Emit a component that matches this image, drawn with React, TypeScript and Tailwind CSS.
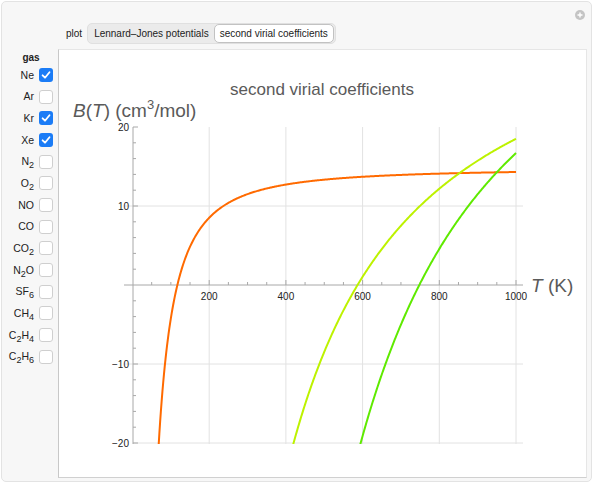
import React from "react";

const Sub = ({ children }: { children: React.ReactNode }) => (
  <span className="text-[9px] relative top-[3px]">{children}</span>
);

const gases: { label: React.ReactNode; checked: boolean }[] = [
  { label: "Ne", checked: true },
  { label: "Ar", checked: false },
  { label: "Kr", checked: true },
  { label: "Xe", checked: true },
  { label: <>N<Sub>2</Sub></>, checked: false },
  { label: <>O<Sub>2</Sub></>, checked: false },
  { label: "NO", checked: false },
  { label: "CO", checked: false },
  { label: <>CO<Sub>2</Sub></>, checked: false },
  { label: <>N<Sub>2</Sub>O</>, checked: false },
  { label: <>SF<Sub>6</Sub></>, checked: false },
  { label: <>CH<Sub>4</Sub></>, checked: false },
  { label: <>C<Sub>2</Sub>H<Sub>4</Sub></>, checked: false },
  { label: <>C<Sub>2</Sub>H<Sub>6</Sub></>, checked: false },
];

// page coords of the chart
const X = (T: number) => 131.5 + 0.3835 * T;
const Y = (B: number) => 284 - 7.9 * B;

// rough fits to the picture
const neon = (T: number) => 14.78 * (1 - Math.pow(117 / T, 1.6));
const expFit = (b: number, a: number, c: number) => (T: number) => b - a * (Math.exp(c / T) - 1);

const curves = [
  { f: neon, from: 50, color: "#ff6a00" },
  { f: expFit(41.26, 122.8, 170), from: 380, color: "#bdf200" },
  { f: expFit(53.15, 60.42, 472), from: 560, color: "#5fea00" },
];

function curvePath(f: (T: number) => number, from: number) {
  const pts: string[] = [];
  for (let T = from; T <= 1000; T += 2) {
    const B = Math.max(-26, Math.min(26, f(T)));
    pts.push(`${X(T).toFixed(2)},${Y(B).toFixed(2)}`);
  }
  return "M" + pts.join(" L");
}

function Checkbox({ checked }: { checked: boolean }) {
  if (checked)
    return (
      <div className="w-[14px] h-[14px] rounded-[3px] bg-[#1b7cf6] flex items-center justify-center">
        <svg width="10" height="10" viewBox="0 0 10 10">
          <path d="M1.6 5.3 L4 7.7 L8.5 2.2" fill="none" stroke="white" strokeWidth="1.8" strokeLinecap="round" strokeLinejoin="round" />
        </svg>
      </div>
    );
  return <div className="w-[14px] h-[14px] rounded-[3px] bg-white border border-[#cfcfcf]" />;
}

function Chart() {
  const xt = [200, 400, 600, 800, 1000];
  const minorX: number[] = [];
  for (let t = 50; t <= 1000; t += 50) if (t % 200 !== 0) minorX.push(t);
  const minorY: number[] = [];
  for (let v = -18; v <= 18; v += 2) if (v % 10 !== 0) minorY.push(v);
  return (
    <svg width="527" height="427" className="block" style={{ fontFamily: '"Liberation Sans", Arial, sans-serif' }}>
      <defs>
        <clipPath id="pr">
          <rect x="123" y="126" width="399" height="317" />
        </clipPath>
      </defs>
      <g transform="translate(-58,-49)">
        <text x="321" y="94" textAnchor="middle" fontSize="17" fill="#5a5a5a">second virial coefficients</text>
        <text x="72" y="116" fontSize="19" fill="#5a5a5a">
          <tspan fontStyle="italic">B</tspan>(<tspan fontStyle="italic">T</tspan>) (cm<tspan fontSize="13" dy="-8">3</tspan><tspan dy="8">/mol)</tspan>
        </text>
        <text x="530" y="291" fontSize="19" fill="#5a5a5a">
          <tspan fontStyle="italic">T</tspan> (K)
        </text>
        {/* grid */}
        {xt.map((t) => (
          <line key={t} x1={X(t)} x2={X(t)} y1={126} y2={443} stroke="#e2e2e2" strokeWidth="1" />
        ))}
        {[10, -10].map((v) => (
          <line key={v} x1={123} x2={522} y1={Y(v)} y2={Y(v)} stroke="#e2e2e2" strokeWidth="1" />
        ))}
        <line x1={132} x2={522} y1={Y(-20)} y2={Y(-20)} stroke="#e2e2e2" strokeWidth="1" />
        {/* axes */}
        <line x1={123} x2={522} y1={284} y2={284} stroke="#a8a8a8" strokeWidth="1" />
        <line x1={132} x2={132} y1={126} y2={443} stroke="#a8a8a8" strokeWidth="1" />
        {xt.map((t) => (
          <line key={"m" + t} x1={X(t)} x2={X(t)} y1={284} y2={279} stroke="#a8a8a8" />
        ))}
        {minorX.map((t) => (
          <line key={"n" + t} x1={X(t)} x2={X(t)} y1={284} y2={281} stroke="#a8a8a8" />
        ))}
        {[20, 10, -10, -20].map((v) => (
          <line key={"y" + v} x1={132} x2={137} y1={Y(v)} y2={Y(v)} stroke="#a8a8a8" />
        ))}
        {minorY.map((v) => (
          <line key={"z" + v} x1={132} x2={135} y1={Y(v)} y2={Y(v)} stroke="#a8a8a8" />
        ))}
        {xt.map((t) => (
          <text key={"l" + t} x={X(t)} y={299} textAnchor="middle" fontSize="10" fill="#222">{t}</text>
        ))}
        {[20, 10, -10, -20].map((v) => (
          <text key={"k" + v} x={128} y={Y(v) + 3.5} textAnchor="end" fontSize="10" fill="#222">
            {v < 0 ? "\u2212" + Math.abs(v) : v}
          </text>
        ))}
        <g clipPath="url(#pr)">
          {curves.map((c, i) => (
            <path key={i} d={curvePath(c.f, c.from)} fill="none" stroke={c.color} strokeWidth="2" />
          ))}
        </g>
      </g>
    </svg>
  );
}

export default function App() {
  return (
    <div className="w-[594px] h-[484px] bg-white p-[1px]" style={{ fontFamily: '"Liberation Sans", Arial, sans-serif' }}>
      <div className="relative w-[591px] h-[481px] rounded-[5px] border border-[#e3e3e3] bg-[#f7f7f7]">
        <div className="absolute right-[6px] top-[8px] w-[10px] h-[10px] rounded-full bg-[#c4c4c4] flex items-center justify-center">
          <svg width="6" height="6" viewBox="0 0 6 6">
            <path d="M3 0.5 V5.5 M0.5 3 H5.5" stroke="white" strokeWidth="1.4" />
          </svg>
        </div>
        <div className="flex items-center pt-[21px] pl-[64px] h-[42px]">
          <span className="text-[10px] text-[#222] mr-[5px]">plot</span>
          <div className="flex items-center h-[21px] rounded-[5px] bg-[#ebebeb] border border-[#e0e0e0] px-[1px]">
            <div className="px-[5px] text-[10px] text-[#222] leading-[19px]">Lennard–Jones potentials</div>
            <div className="px-[5px] text-[10px] text-[#222] leading-[17px] bg-white border border-[#c2c2c2] rounded-[5px]">
              second virial coefficients
            </div>
          </div>
        </div>
        <div className="flex mt-[5px]">
          <div className="w-[56px] flex flex-col">
            <div className="h-[15px] text-[10px] font-bold text-[#222] text-center pl-[2px] leading-[18px]">gas</div>
            {gases.map((g, i) => (
              <div key={i} className="h-[21.7px] flex items-center justify-end gap-[5px] pr-[5px]">
                <span className="text-[10.5px] text-[#222] leading-none">{g.label}</span>
                <Checkbox checked={g.checked} />
              </div>
            ))}
          </div>
          <div className="w-[529px] h-[429px] bg-white border-l border-b border-t border-r border-l-[#c8c8c8] border-b-[#d0d0d0] border-t-[#e6e6e6] border-r-[#e6e6e6]">
            <Chart />
          </div>
        </div>
      </div>
    </div>
  );
}
